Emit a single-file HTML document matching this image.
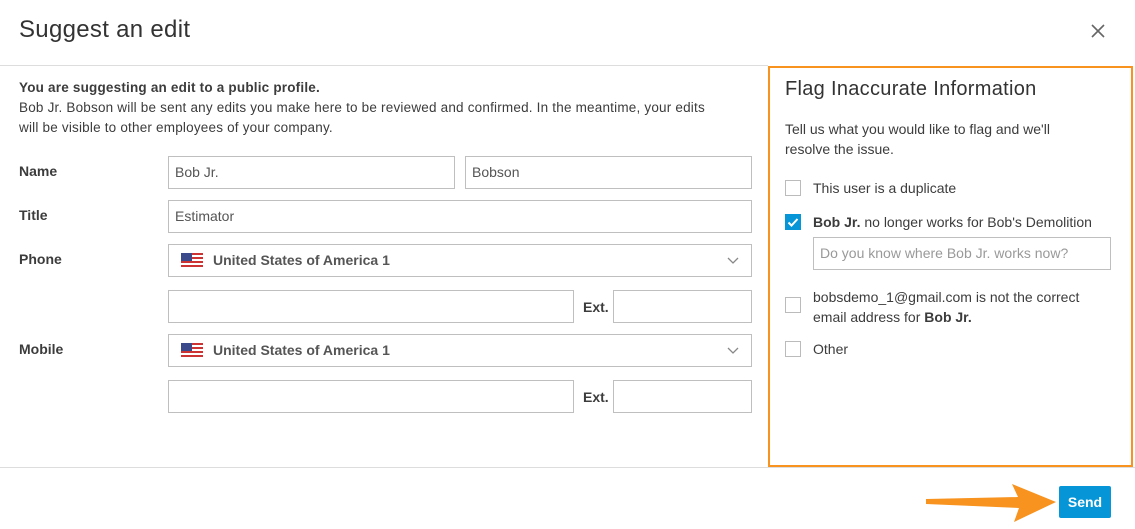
<html><head><style>
body{margin:0;width:1135px;height:529px;background:#fff;font-family:"Liberation Sans",sans-serif;color:#3c3c3c;position:relative;overflow:hidden;font-size:14px}
.a{position:absolute}
.in{position:absolute;border:1px solid #bfbfbf;box-sizing:border-box;height:33px;padding-left:6px;line-height:31px;color:#555;font-size:14px}
.lb{position:absolute;left:19px;font-weight:bold;font-size:14px}
.cb{position:absolute;left:785px;width:16px;height:16px;border:1px solid #bbb;box-sizing:border-box}
.flag{display:inline-block;width:22px;height:14px;vertical-align:-2px;margin:0 10px 0 6px;background:repeating-linear-gradient(#c33 0 2px,#fff 2px 4px);position:relative}
.flag:before{content:"";position:absolute;left:0;top:0;width:11px;height:8px;background:#3b4a8a}
.sel{font-weight:bold;color:#555}
</style></head><body>
<div class="a" style="left:19px;top:16px;font-size:24px;color:#333;letter-spacing:0.3px">Suggest an edit</div>
<svg class="a" style="left:1090px;top:23px" width="16" height="16"><path d="M2 2L14 14M14 2L2 14" stroke="#666" stroke-width="1.6"/></svg>
<div class="a" style="left:0;top:65px;width:768px;height:1px;background:#ddd"></div>
<div class="a" style="left:0;top:467px;width:1135px;height:1px;background:#ddd"></div>
<div class="a" style="left:19px;top:78px;line-height:20px;white-space:nowrap;font-size:13.5px;letter-spacing:0.2px"><b>You are suggesting an edit to a public profile.</b><br>Bob Jr. Bobson will be sent any edits you make here to be reviewed and confirmed. In the meantime, your edits<br>will be visible to other employees of your company.</div>
<div class="lb" style="top:163px">Name</div>
<div class="lb" style="top:207px">Title</div>
<div class="lb" style="top:251px">Phone</div>
<div class="lb" style="top:341px">Mobile</div>
<div class="in" style="left:168px;top:156px;width:287px">Bob Jr.</div>
<div class="in" style="left:465px;top:156px;width:287px">Bobson</div>
<div class="in" style="left:168px;top:200px;width:584px">Estimator</div>
<div class="in" style="left:168px;top:244px;width:584px"><span class="flag"></span><span class="sel">United States of America 1</span><svg class="a" style="right:12px;top:12px" width="12" height="8"><path d="M1 1L6 6L11 1" stroke="#888" fill="none" stroke-width="1.3"/></svg></div>
<div class="in" style="left:168px;top:290px;width:406px"></div>
<div class="a" style="left:583px;top:299px;font-weight:bold">Ext.</div>
<div class="in" style="left:613px;top:290px;width:139px"></div>
<div class="in" style="left:168px;top:334px;width:584px"><span class="flag"></span><span class="sel">United States of America 1</span><svg class="a" style="right:12px;top:12px" width="12" height="8"><path d="M1 1L6 6L11 1" stroke="#888" fill="none" stroke-width="1.3"/></svg></div>
<div class="in" style="left:168px;top:380px;width:406px"></div>
<div class="a" style="left:583px;top:389px;font-weight:bold">Ext.</div>
<div class="in" style="left:613px;top:380px;width:139px"></div>
<div class="a" style="left:768px;top:66px;width:365px;height:401px;border:2px solid #f7931e;box-sizing:border-box"></div>
<div class="a" style="left:785px;top:78px;font-size:20px;color:#333;letter-spacing:0.3px">Flag Inaccurate Information</div>
<div class="a" style="left:785px;top:119px;line-height:20px;width:295px">Tell us what you would like to flag and we'll resolve the issue.</div>
<div class="cb" style="top:180px"></div><div class="a" style="left:813px;top:180px">This user is a duplicate</div>
<div class="cb" style="top:214px;background:#0696d7;border-color:#0696d7"><svg width="16" height="16" class="a" style="left:-1px;top:-1px"><path d="M3.5 8.5L6.5 11.5L12.5 5" stroke="#fff" stroke-width="2" fill="none"/></svg></div>
<div class="a" style="left:813px;top:214px"><b>Bob Jr.</b> no longer works for Bob's Demolition</div>
<div class="in" style="left:813px;top:237px;width:298px;color:#999">Do you know where Bob Jr. works now?</div>
<div class="cb" style="top:297px"></div><div class="a" style="left:813px;top:287px;line-height:20px">bobsdemo_1@gmail.com is not the correct<br>email address for <b>Bob Jr.</b></div>
<div class="cb" style="top:341px"></div><div class="a" style="left:813px;top:341px">Other</div>
<svg class="a" style="left:920px;top:480px" width="140" height="45"><path d="M6 19L98 17L92 4L136 22L94 42L99 28L6 24Z" fill="#f7931e"/></svg>
<div class="a" style="left:1059px;top:486px;width:52px;height:32px;background:#0696d7;border-radius:2px;color:#fff;font-weight:bold;text-align:center;line-height:32px">Send</div>
</body></html>
